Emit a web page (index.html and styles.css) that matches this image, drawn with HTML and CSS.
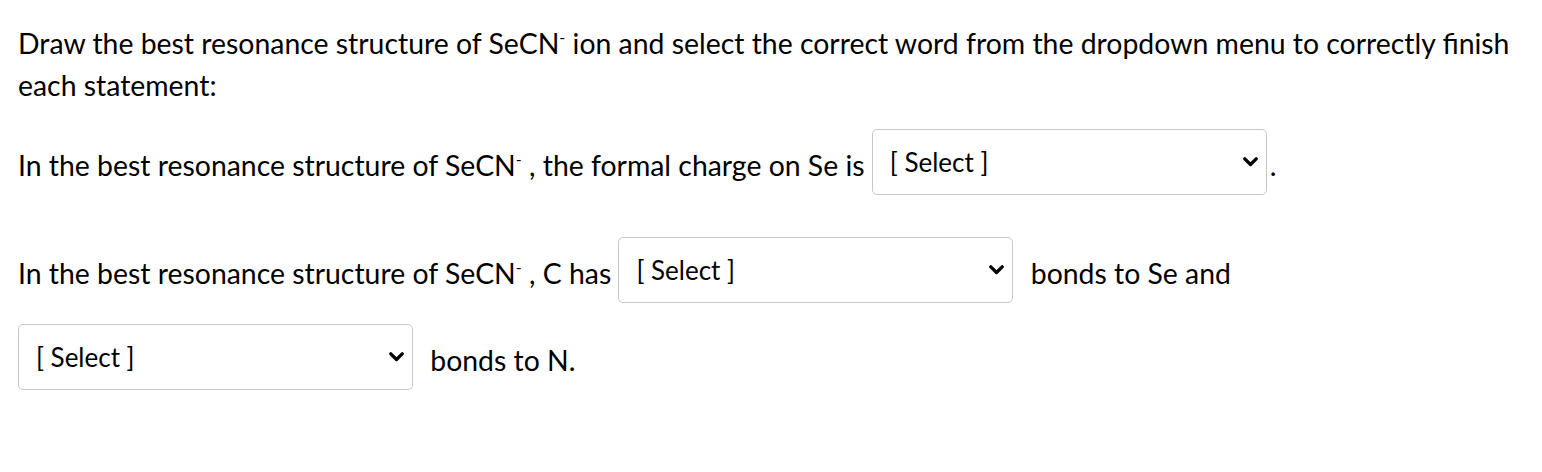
FILE: index.html
```html
<!DOCTYPE html>
<html lang="en">
<head>
<meta charset="utf-8">
<title>SeCN question</title>
<link rel="stylesheet" href="styles.css">
</head>
<body>
<div class="question">
  <p class="intro">Draw the best resonance structure of SeCN<sup>-</sup> ion and select the correct word from the dropdown menu to correctly finish each statement:</p>
  <p class="stmt first">In the best resonance structure of SeCN<sup>-</sup> , the formal charge on Se is <span class="sel tight"><select aria-label="formal charge on Se"><option>[ Select ]</option></select><svg class="chev" viewBox="0 0 15 10" width="15" height="10"><path d="M1.8 1.8 L7.5 7.5 L13.2 1.8" fill="none" stroke="#000" stroke-width="3.3" stroke-linecap="round" stroke-linejoin="round"/></svg></span>.</p>
  <p class="stmt second">In the best resonance structure of SeCN<sup>-</sup> , C has <span class="sel"><select aria-label="bonds to Se"><option>[ Select ]</option></select><svg class="chev" viewBox="0 0 15 10" width="15" height="10"><path d="M1.8 1.8 L7.5 7.5 L13.2 1.8" fill="none" stroke="#000" stroke-width="3.3" stroke-linecap="round" stroke-linejoin="round"/></svg></span> bonds to Se and <span class="sel"><select aria-label="bonds to N"><option>[ Select ]</option></select><svg class="chev" viewBox="0 0 15 10" width="15" height="10"><path d="M1.8 1.8 L7.5 7.5 L13.2 1.8" fill="none" stroke="#000" stroke-width="3.3" stroke-linecap="round" stroke-linejoin="round"/></svg></span> bonds to N.</p>
</div>
</body>
</html>
```
FILE: styles.css
```css
html, body {
  margin: 0;
  padding: 0;
  background: #fff;
}
body {
  font-family: Lato, "Open Sans", sans-serif;
  color: #000;
}
.question {
  padding: 22px 8px 0 18px;
  font-size: 28.4px;
  line-height: 42px;
}
.question p {
  margin: 0;
}
.intro {
  margin-bottom: 13px !important;
}
sup {
  font-size: 16px;
  line-height: 0;
  vertical-align: 11px;
}
.stmt.first {
  margin-bottom: 21px !important;
}
.sel {
  position: relative;
  display: inline-block;
  margin: 10px 10px 11px 0;
  vertical-align: 4px;
  line-height: normal;
}
.sel.tight {
  margin-right: 3px;
}
.sel select {
  appearance: none;
  -webkit-appearance: none;
  display: block;
  width: 395px;
  height: 66px;
  box-sizing: border-box;
  border: 1.5px solid #c8c8c8;
  border-radius: 5px;
  background: #fff;
  font-family: Lato, "Open Sans", sans-serif;
  font-size: 26px;
  color: #000;
  padding: 0 40px 0 17px;
  margin: 0;
}
.sel .chev {
  position: absolute;
  right: 9px;
  top: 28px;
  pointer-events: none;
}
```
